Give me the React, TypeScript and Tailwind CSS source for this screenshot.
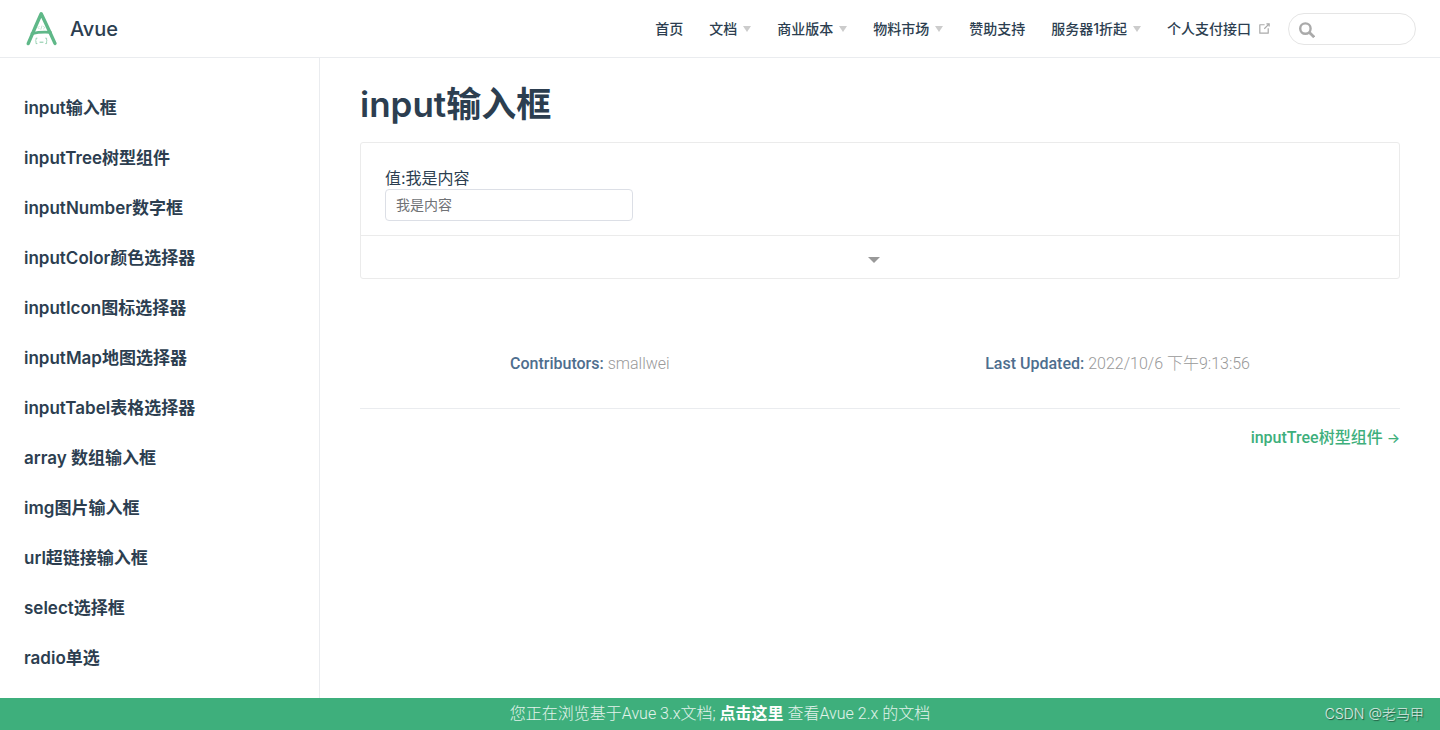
import React from "react";

const sidebarItems = [
  "input输入框",
  "inputTree树型组件",
  "inputNumber数字框",
  "inputColor颜色选择器",
  "inputIcon图标选择器",
  "inputMap地图选择器",
  "inputTabel表格选择器",
  "array 数组输入框",
  "img图片输入框",
  "url超链接输入框",
  "select选择框",
  "radio单选",
];

type NavItem = { label: string; kind: "link" | "menu" | "external" };

const navItems: NavItem[] = [
  { label: "首页", kind: "link" },
  { label: "文档", kind: "menu" },
  { label: "商业版本", kind: "menu" },
  { label: "物料市场", kind: "menu" },
  { label: "赞助支持", kind: "link" },
  { label: "服务器1折起", kind: "menu" },
  { label: "个人支付接口", kind: "external" },
];

function Logo() {
  return (
    <svg viewBox="0 0 34 36" className="h-9 w-[34px]" fill="none" stroke="#5fb888" strokeLinecap="round" strokeLinejoin="round">
      <path d="M4.2 32.6 C8.4 23 13 12 17.2 2.8 C21.7 12 26.7 23 31 32.4" strokeWidth="3.4" />
      <path d="M8 22.6 C14 21.2 21 21 26.5 21.4" strokeWidth="2.8" />
      <path d="M15.2 15.4 l-1.2 1.2 1.2 1.2 M19.6 15.4 l1.2 1.2 -1.2 1.2 M17.9 15 l-1 3.2" strokeWidth="0.4" />
      <path d="M13 27.2 h-1 v2.1 l-.6 .6 .6 .6 v2.1 h1 M21.6 27.2 h1 v2.1 l.6 .6 -.6 .6 v2.1 h-1" strokeWidth="0.6" />
      <path d="M16 31.2 h3" strokeWidth="0.8" />
    </svg>
  );
}

function OutboundIcon() {
  return (
    <svg viewBox="0 0 100 100" className="h-[15px] w-[15px]" fill="#aaaaaa" aria-hidden="true">
      <path d="M18.8,85.1h56l0,0c2.2,0,4-1.8,4-4v-32h-8v28h-48v-48h28v-8h-32l0,0c-2.2,0-4,1.8-4,4v56C14.8,83.3,16.6,85.1,18.8,85.1z" />
      <polygon points="45.7,48.7 51.3,54.3 77.2,28.5 77.2,37.2 85.2,37.2 85.2,14.9 62.8,14.9 62.8,22.9 71.5,22.9" />
    </svg>
  );
}

function NavEntry({ item }: { item: NavItem }) {
  if (item.kind === "menu") {
    return (
      <button type="button" className="flex items-center gap-1.5">
        {item.label}
        <span className="border-x-4 border-t-[6px] border-x-transparent border-t-[#cccccc]" />
      </button>
    );
  }
  return (
    <a href="#" className="flex items-center gap-1.5">
      {item.label}
      {item.kind === "external" && <OutboundIcon />}
    </a>
  );
}

export default function App() {
  return (
    <div className="flex h-screen flex-col bg-white font-['Inter','Noto_Sans_CJK_SC',sans-serif] text-base text-[#2c3e50]">
      <header className="flex h-[58px] shrink-0 items-center border-b border-[#eaecef] px-6">
        <a href="#" className="flex items-center gap-3 text-xl font-medium">
          <Logo />
          Avue
        </a>
        <nav className="ml-auto flex items-center gap-[26px] text-sm font-medium">
          {navItems.map((item) => (
            <NavEntry key={item.label} item={item} />
          ))}
        </nav>
        <label className="ml-4 flex h-8 w-32 items-center rounded-full border border-[#e5e5e5] px-2.5">
          <svg viewBox="0 0 16 16" className="mt-0.5 h-4 w-4 shrink-0" fill="none" stroke="#aaaaaa" aria-hidden="true">
            <circle cx="6.4" cy="6.6" r="5.2" strokeWidth="2.4" />
            <path d="M10.4 10.6 L15.2 15.2" strokeWidth="2.8" />
          </svg>
          <input type="text" aria-label="Search" className="w-full min-w-0 bg-transparent pl-2 text-sm outline-none" />
        </label>
      </header>

      <div className="flex min-h-0 flex-1">
        <aside className="w-80 shrink-0 overflow-hidden border-r border-[#eaecef] px-6 py-[25px]">
          <ul>
            {sidebarItems.map((label) => (
              <li key={label}>
                <a href="#" className="block h-[50px] text-[17px] leading-[50px] font-semibold">
                  {label}
                </a>
              </li>
            ))}
          </ul>
        </aside>

        <main className="min-w-0 flex-1 overflow-hidden px-10 pt-6">
          <h1 className="text-[35px] leading-[44px] font-semibold">input输入框</h1>

          <section className="mt-4 rounded-[3px] border border-[#ebebeb]">
            <div className="px-6 pt-6 pb-3.5">
              <label htmlFor="demo-input" className="block text-base leading-[22px]">
                值:我是内容
              </label>
              <input
                id="demo-input"
                type="text"
                defaultValue="我是内容"
                className="block h-8 w-[248px] rounded border border-[#dcdfe6] px-2.5 pb-0.5 text-sm text-[#707276]"
              />
            </div>
            <button type="button" aria-label="展开" className="flex h-[43px] w-full items-center justify-center border-t border-[#ebebeb] pt-1.5">
              <span className="mr-3 border-x-[6px] border-t-[6px] border-x-transparent border-t-[#999999]" />
            </button>
          </section>

          <div className="mt-[72px] flex items-center justify-between px-[150px] font-['Roboto','Noto_Sans_CJK_SC',sans-serif] leading-[26px] text-[#999999]">
            <p>
              <span className="font-medium text-[#4e6e8e]">Contributors:</span> <span className="font-light">smallwei</span>
            </p>
            <p>
              <span className="font-medium text-[#4e6e8e]">Last Updated:</span> <span className="font-light">2022/10/6 下午9:13:56</span>
            </p>
          </div>

          <div className="mt-[31px] border-t border-[#eaecef] pt-[17px] text-right font-['Roboto','Noto_Sans_CJK_SC',sans-serif] leading-6 text-[#3eaf7c]">
            <a href="#" className="font-medium">
              inputTree树型组件
            </a>{" "}
            <span className="font-['Inter',sans-serif] text-sm font-medium">→</span>
          </div>
        </main>
      </div>

      <footer className="relative flex h-8 shrink-0 items-center justify-center bg-[#3eaf7c] text-white/85">
        <p className="font-['Roboto','Noto_Sans_CJK_SC',sans-serif] font-light">
          您正在浏览基于Avue 3.x文档; <a href="#" className="font-semibold text-white">点击这里</a> 查看Avue 2.x 的文档
        </p>
        <span className="absolute right-4 text-sm font-light text-white/80 [text-shadow:1px_1px_1px_rgba(0,0,0,0.5)]">CSDN @老马甲</span>
      </footer>
    </div>
  );
}
